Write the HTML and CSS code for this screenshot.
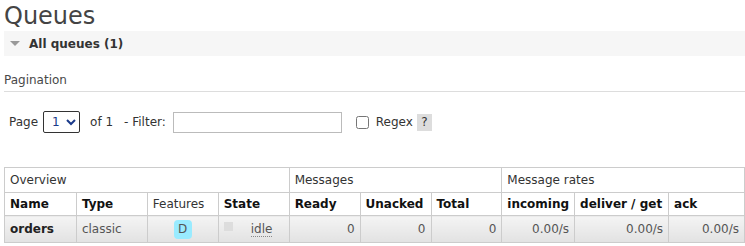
FILE: index.html
```html
<!DOCTYPE html>
<html>
  <head>
    <title>Queues</title>
    <link rel="stylesheet" href="styles.css">
  </head>
  <body>
    <div class="main">
      <h1>Queues</h1>

      <div class="section-bar">
        <span class="arrow"></span>
        <span class="section-title">All queues (1)</span>
      </div>

      <h3 class="pager-title">Pagination</h3>

      <div class="pager">
        <label for="page">Page</label>
        <select id="page">
          <option value="1">1</option>
        </select>
        <span class="of">of 1</span>
        <label for="filter" class="filter-label">- Filter:</label>
        <input type="text" id="filter" />
        <input type="checkbox" id="regex" />
        <label for="regex" class="regex-label">Regex</label>
        <span class="help">?</span>
      </div>

      <table class="list">
        <thead>
          <tr class="groups">
            <th colspan="4">Overview</th>
            <th colspan="3">Messages</th>
            <th colspan="3">Message rates</th>
          </tr>
          <tr class="cols">
            <th class="c-name">Name</th>
            <th class="c-type">Type</th>
            <th class="c-feat plain">Features</th>
            <th class="c-state">State</th>
            <th class="c-num">Ready</th>
            <th class="c-num">Unacked</th>
            <th class="c-num">Total</th>
            <th class="c-rate">incoming</th>
            <th class="c-rate2">deliver / get</th>
            <th class="c-ack">ack</th>
          </tr>
        </thead>
        <tbody>
          <tr class="alt1">
            <td><b>orders</b></td>
            <td class="muted">classic</td>
            <td class="center"><abbr class="badge" title="durable">D</abbr></td>
            <td><span class="state-box"></span><abbr class="idle" title="idle">idle</abbr></td>
            <td class="r">0</td>
            <td class="r">0</td>
            <td class="r">0</td>
            <td class="r">0.00/s</td>
            <td class="r">0.00/s</td>
            <td class="r">0.00/s</td>
          </tr>
        </tbody>
      </table>
    </div>
  </body>
</html>
```

FILE: styles.css
```css
body {
  margin: 0;
  font: 12px "DejaVu Sans", Verdana, sans-serif;
  color: #484848;
  background: #fff;
}
.main {
  padding-left: 4px;
}
h1 {
  margin: 0;
  height: 31px;
  font-size: 24px;
  font-weight: normal;
  line-height: 38px;
  color: #444;
  position: relative;
  top: -3px;
}
.section-bar {
  display: flex;
  align-items: center;
  height: 25px;
  background: #f6f6f6;
}
.arrow {
  width: 0;
  height: 0;
  margin: 0 9px 0 6px;
  border-left: 5px solid transparent;
  border-right: 5px solid transparent;
  border-top: 5px solid #999;
}
.section-title {
  font-weight: bold;
  color: #333;
}
.pager-title {
  margin: 17px 0 0;
  padding-bottom: 4px;
  font-size: 12px;
  font-weight: normal;
  line-height: 14px;
  color: #484848;
  border-bottom: 1px solid #ddd;
}
.pager {
  display: flex;
  align-items: center;
  height: 22px;
  margin-top: 19px;
  padding-left: 5px;
  color: #333;
}
.pager select {
  width: 37px;
  height: 22px;
  margin: 0 10px 0 5px;
  padding: 0 0 0 4px;
  font: 12px "DejaVu Sans", Verdana, sans-serif;
  color: #1a3a8a;
  border: 1px solid #333;
  border-radius: 2px;
  background: #fff;
}
.of {
  margin-right: 11px;
}
.filter-label {
  margin-right: 7px;
}
#filter {
  width: 169px;
  height: 21px;
  box-sizing: border-box;
  margin: 0 13px 0 0;
  border: 1px solid #bbb;
}
#regex {
  width: 13px;
  height: 13px;
  margin: 0 7px 0 1px;
}
.regex-label {
  margin-right: 4px;
}
.help {
  display: inline-block;
  width: 15px;
  height: 17px;
  line-height: 17px;
  text-align: center;
  background: #ddd;
  color: #333;
}
table.list {
  margin-top: 34px;
  width: 741px;
  border-collapse: collapse;
  color: #222;
}
table.list th,
table.list td {
  border: 1px solid #ccc;
  padding: 0 5px;
  text-align: left;
  white-space: nowrap;
}
tr.groups th {
  height: 24px;
  font-weight: normal;
  color: #333;
}
tr.cols th {
  height: 22px;
  font-weight: bold;
  color: #111;
}
tr.cols th.plain {
  font-weight: normal;
  color: #333;
}
.c-name { width: 61px; }
.c-type { width: 60px; }
.c-feat { width: 60px; }
.c-state { width: 60px; }
.c-num { width: 60px; }
.c-rate { width: 61px; }
.c-rate2 { width: 83px; }
.c-ack { width: 65px; }
tr.alt1 td {
  height: 26px;
  background: linear-gradient(#f4f4f4, #e2e2e2);
  color: #222;
}
table.list td.muted {
  color: #555;
}
table.list td.center {
  text-align: center;
}
table.list td.r {
  text-align: right;
  color: #555;
}
.badge {
  display: inline-block;
  width: 18px;
  height: 19px;
  line-height: 19px;
  text-align: center;
  background: #99ebff;
  border-radius: 4px;
  color: #555;
  font-size: 12px;
  text-decoration: none;
  vertical-align: middle;
}
.state-box {
  display: inline-block;
  width: 9px;
  height: 9px;
  margin: 0 18px 0 0;
  background: #ddd;
  vertical-align: 2px;
}
.idle {
  color: #555;
  text-decoration: none;
  border-bottom: 1px dotted #888;
}
```
